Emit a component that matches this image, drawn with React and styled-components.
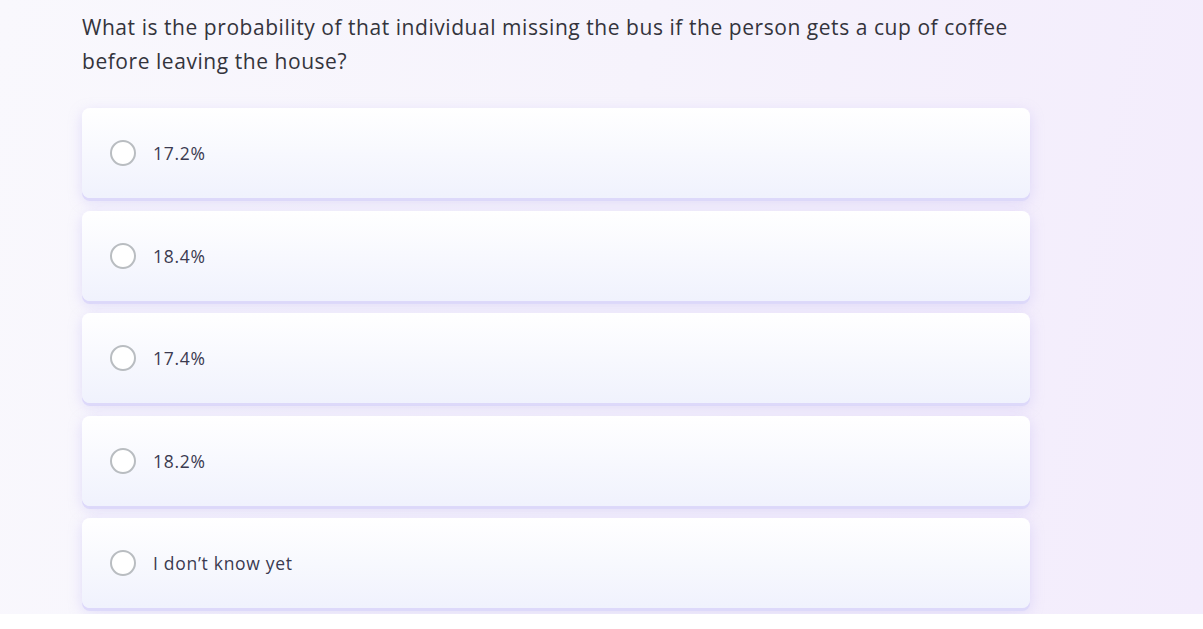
import styled, { createGlobalStyle } from 'styled-components';

const GlobalStyle = createGlobalStyle`
	html, body {
		margin: 0;
		padding: 0;
		background: #ffffff;
	}
	body {
		font-family: "Open Sans", "Noto Sans", sans-serif;
	}
`

const Page = styled.div`
	width: 1203px;
	height: 614px;
	overflow: hidden;
	background: linear-gradient(100deg, #f9f8fd 0%, #f6f3fc 50%, #f3ecfc 100%);
`

const Content = styled.div`
	width: 948px;
	margin-left: 82px;
	padding-top: 10px;
`

const Question = styled.h2`
	max-width: 945px;
	margin: 0 0 30px;
	font-size: 21px;
	font-weight: 500;
	line-height: 34px;
	color: #34343c;
	letter-spacing: 0.55px;
`

const Options = styled.div`
	display: flex;
	flex-direction: column;
	gap: 12.5px;
`

const Option = styled.label`
	display: flex;
	align-items: center;
	gap: 17px;
	height: 90px;
	padding-left: 28px;
	box-sizing: border-box;
	border-radius: 8px;
	background: linear-gradient(180deg, #ffffff 0%, #f0f2fd 100%);
	box-shadow: 0 3px 0 #ddd9fa, 0 4px 14px rgba(180, 170, 240, 0.35);
	cursor: pointer;
`

const Radio = styled.span`
	width: 22px;
	height: 22px;
	border-radius: 50%;
	border: 2px solid #b9bdc1;
	background: #ffffff;
	flex-shrink: 0;
`

const OptionText = styled.span`
	font-size: 17.5px;
	font-weight: 500;
	color: #3b3a50;
	letter-spacing: 0.7px;
`

const answers = ['17.2%', '18.4%', '17.4%', '18.2%', "I don\u2019t know yet"]

export default function App() {
	return (
		<>
			<GlobalStyle />
			<Page>
				<Content>
					<Question>
						What is the probability of that individual missing the bus if the person gets a cup of coffee before leaving the house?
					</Question>
					<Options>
						{answers.map((a) => (
							<Option key={a}>
								<Radio />
								<OptionText>{a}</OptionText>
							</Option>
						))}
					</Options>
				</Content>
			</Page>
		</>
	)
}
